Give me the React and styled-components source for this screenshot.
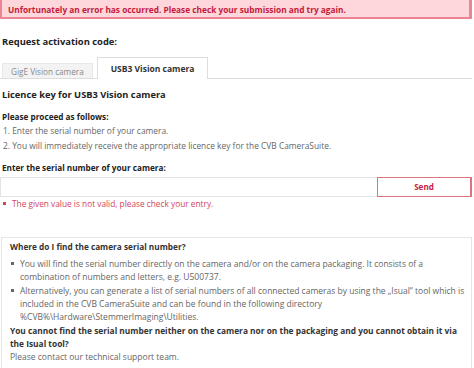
import React from "react";
import styled, { createGlobalStyle } from "styled-components";

const Global = createGlobalStyle`
  html, body { margin: 0; padding: 0; background: #fff; }
  body { font-family: "Open Sans", "Liberation Sans", sans-serif; color: #333; }
  * { box-sizing: border-box; }
`;

const Page = styled.div`
  width: 474px;
  height: 368px;
  overflow: hidden;
  padding-right: 2px;
`;

const Alert = styled.div`
  margin-top: -2px;
  height: 21px;
  border: 2px solid #ec8593;
  border-right-width: 3px;
  background: #fdd7db;
  color: #c41a3b;
  font-weight: 700;
  font-size: 8.3px;
  line-height: 15px;
  padding: 2px 0 0 6px;
  white-space: nowrap;
`;

const Heading = styled.div`
  font-weight: 700;
  font-size: ${(p) => p.$size || 9.3}px;
  line-height: ${(p) => p.$lh || 12}px;
  color: #222;
  margin-top: ${(p) => p.$mt || 0}px;
  padding-left: 2px;
  white-space: nowrap;
`;

const TabBar = styled.div`
  display: flex;
  align-items: flex-end;
  gap: 4px;
  padding-left: 2px;
  border-bottom: 1px solid #ddd;
  height: 22px;
  margin-top: 8px;
`;

const Tab = styled.div`
  height: ${(p) => (p.$active ? 22 : 15)}px;
  padding: 0 ${(p) => (p.$active ? 13 : 8)}px;
  border: 1px solid ${(p) => (p.$active ? "#ddd" : "#e8e8e8")};
  border-bottom: none;
  background: ${(p) => (p.$active ? "#fff" : "#f3f3f3")};
  margin-bottom: ${(p) => (p.$active ? -1 : 0)}px;
  color: ${(p) => (p.$active ? "#333" : "#888")};
  font-weight: ${(p) => (p.$active ? 700 : 400)};
  font-size: ${(p) => (p.$active ? 8.5 : 8.2)}px;
  display: flex;
  align-items: center;
  white-space: nowrap;
`;

const Steps = styled.ol`
  margin: 0;
  padding: 0 0 0 3px;
  list-style: none;
  color: #666;
  font-size: 8.4px;
`;

const Step = styled.li`
  line-height: 15px;
  white-space: nowrap;
`;

const FormRow = styled.div`
  display: flex;
  height: 20px;
  margin-top: 3px;
`;

const Input = styled.input`
  flex: 1;
  border: 1px solid #e3e3e3;
  border-right: none;
  background: #fff;
  outline: none;
  height: 20px;
`;

const SendButton = styled.button`
  width: 95px;
  height: 20px;
  border: 1px solid #dc7480;
  border-right-width: 2px;
  background: #fff;
  color: #c8233f;
  font-family: inherit;
  font-weight: 700;
  font-size: 8.1px;
  padding: 0;
  cursor: pointer;
`;

const ErrorText = styled.div`
  display: flex;
  align-items: center;
  gap: 6px;
  padding-left: 3px;
  margin-top: 1px;
  color: #d0455c;
  font-size: 8.3px;
  line-height: 12px;
  white-space: nowrap;
  &::before {
    content: "";
    width: 3px;
    height: 3px;
    background: #d0455c;
  }
`;

const InfoBox = styled.div`
  margin-top: 27px;
  margin-left: 1px;
  border: 1px solid #e6e6e6;
  padding: 2px 6px 10px 8px;
  height: 140px;
`;

const InfoTitle = styled.div`
  font-weight: 700;
  font-size: 8.25px;
  color: #333;
  line-height: 13px;
`;

const Bullets = styled.ul`
  list-style: none;
  margin: 4.5px 0 0;
  padding: 0;
  color: #666;
  font-size: 8.5px;
`;

const Bullet = styled.li`
  position: relative;
  padding-left: 10px;
  line-height: 13px;
  margin-bottom: 1px;
  &::before {
    content: "";
    position: absolute;
    left: 1px;
    top: 5px;
    width: 3px;
    height: 3px;
    background: #666;
  }
`;

const Para = styled.div`
  font-size: ${(p) => (p.$bold ? 8.35 : 8.5)}px;
  line-height: 13px;
  color: ${(p) => (p.$bold ? "#333" : "#666")};
  font-weight: ${(p) => (p.$bold ? 700 : 400)};
  margin-top: ${(p) => p.$mt || 0}px;
`;

export default function App() {
  return (
    <Page>
      <Global />
      <Alert>Unfortunately an error has occurred. Please check your submission and try again.</Alert>
      <Heading $size={9.4} $lh={14} $mt={16}>Request activation code:</Heading>
      <TabBar>
        <Tab>GigE Vision camera</Tab>
        <Tab $active>USB3 Vision camera</Tab>
      </TabBar>
      <Heading $size={9.3} $lh={14} $mt={9}>Licence key for USB3 Vision camera</Heading>
      <Heading $size={8.2} $mt={9}>Please proceed as follows:</Heading>
      <Steps>
        <Step>1. Enter the serial number of your camera.</Step>
        <Step>2. You will immediately receive the appropriate licence key for the CVB CameraSuite.</Step>
      </Steps>
      <Heading $size={8.2} $mt={8.5}>Enter the serial number of your camera:</Heading>
      <FormRow>
        <Input aria-label="Serial number" />
        <SendButton>Send</SendButton>
      </FormRow>
      <ErrorText>The given value is not valid, please check your entry.</ErrorText>
      <InfoBox>
        <InfoTitle>Where do I find the camera serial number?</InfoTitle>
        <Bullets>
          <Bullet>
            You will find the serial number directly on the camera and/or on the camera packaging. It consists of a combination of numbers and letters, e.g. U500737.
          </Bullet>
          <Bullet>
            Alternatively, you can generate a list of serial numbers of all connected cameras by using the „Isual“ tool which is included in the CVB CameraSuite and can be found in the following directory %CVB%\Hardware\StemmerImaging\Utilities.
          </Bullet>
        </Bullets>
        <Para $bold $mt={1}>
          You cannot find the serial number neither on the camera nor on the packaging and you cannot obtain it via the Isual tool?
        </Para>
        <Para>Please contact our technical support team.</Para>
      </InfoBox>
    </Page>
  );
}
